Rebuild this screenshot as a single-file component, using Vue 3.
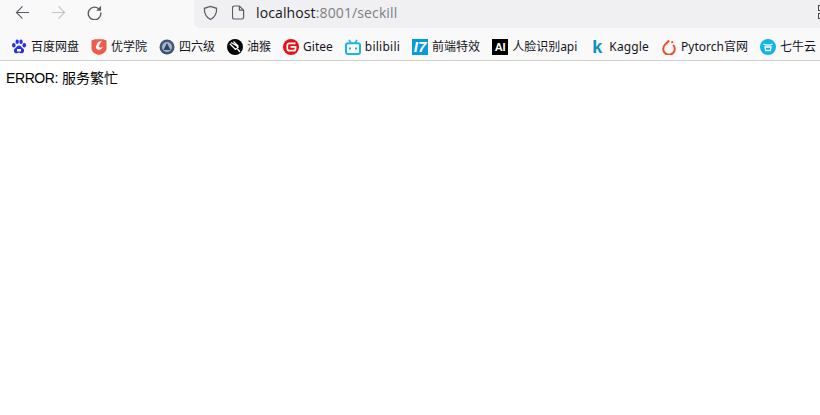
<script setup>
const bookmarks = [
  { id: 'baidu', label: '百度网盘' },
  { id: 'you', label: '优学院' },
  { id: 'cet', label: '四六级' },
  { id: 'monkey', label: '油猴' },
  { id: 'gitee', label: 'Gitee' },
  { id: 'bili', label: 'bilibili' },
  { id: 'qd', label: '前端特效' },
  { id: 'ai', label: '人脸识别api' },
  { id: 'kaggle', label: 'Kaggle' },
  { id: 'torch', label: 'Pytorch官网' },
  { id: 'qiniu', label: '七牛云' }
]
</script>

<template>
  <div class="page">
    <header class="toolbar">
      <nav class="nav">
        <svg class="nav-icon" viewBox="0 0 16 16" fill="none" stroke="#5b5b66" stroke-width="1.2"><path d="M15 8H1.500M8 1.500 1.500 8 8 14.500" /></svg>
        <svg class="nav-icon" viewBox="0 0 16 16" fill="none" stroke="#c4c4c8" stroke-width="1.2"><path d="M1 8h13.500M8 1.500 14.500 8 8 14.500" /></svg>
        <svg class="nav-icon" viewBox="0 0 16 16" fill="none" stroke="#5b5b66" stroke-width="1.500"><path d="M13.300 4.800A6.700 6.700 0 1 0 14.700 8" /><path d="M15 .8V6H9.800Z" fill="#5b5b66" stroke="none" /></svg>
      </nav>
      <div class="urlbar">
        <svg class="shield" viewBox="0 0 16 16" fill="none" stroke="#5b5b66" stroke-width="1.300"><path d="M8 1 14.500 3c.3 6-1.500 9.500-6.500 12C3 12.500 1.200 9 1.500 3Z" /></svg>
        <svg class="file" viewBox="0 0 14 16" fill="none" stroke="#5b5b66" stroke-width="1.300"><path d="M2.500 1h5.500l4.500 4.500V13a2 2 0 0 1-2 2h-8a2 2 0 0 1-2-2V3a2 2 0 0 1 2-2Z" /><path d="M8 1v4.500h4.500" /></svg>
        <span class="url">localhost<span class="url-rest">:8001/seckill</span></span>
        <span class="cut-icon"><i></i><i></i></span>
      </div>
    </header>

    <div class="bookmarks">
      <div v-for="b in bookmarks" :key="b.id" class="bookmark">
        <span class="bm-icon">
          <svg v-if="b.id === 'baidu'" viewBox="0 0 16 16" fill="#2932e1"><ellipse cx="2.800" cy="6.200" rx="1.800" ry="2.300" /><ellipse cx="6.200" cy="2.800" rx="1.700" ry="2.300" /><ellipse cx="10" cy="2.800" rx="1.700" ry="2.300" /><ellipse cx="13.300" cy="6.200" rx="1.800" ry="2.300" /><path d="M8 6.500c2 0 2.500 2 4 3 2 1.500 1 5-1.500 4.800-1 0-1.500-.5-2.500-.5s-1.500.5-2.500.5C3 14.500 2 11 4 9.500c1.500-1 2-3 4-3Z" /><path d="M6 10h4v2.500H6Z" fill="#fff" /></svg>
          <svg v-else-if="b.id === 'you'" viewBox="0 0 16 16"><path d="M.5 1.500 4 .2h8l3.500 1.300v8C15.500 13 11 15.800 8 15.800S.5 13 .5 9.500Z" fill="#ee5a4c" /><path d="M10.800 1.800 7 3 4.800 7.500c0 3 3.200 4.200 5.700 2.500L12 7.500 9.500 8.800 7.500 7.500Z" fill="#fff" /></svg>
          <svg v-else-if="b.id === 'cet'" viewBox="0 0 16 16"><circle cx="8" cy="8" r="7.500" fill="#3f5578" /><circle cx="8" cy="8" r="5" fill="#a9b4c6" /><path d="M4.500 11 8 4l3.500 7Z" fill="#2f4568" /></svg>
          <svg v-else-if="b.id === 'monkey'" viewBox="0 0 16 16"><circle cx="8" cy="8" r="8" fill="#000" /><path d="M2.800 4.800 8.500 10.500 11 8.500 9.500 6.500M4 3.500l6 3.500M6.500 2.500l5 5M10.500 10l2.500 3" stroke="#fff" stroke-width="1.300" fill="none" /></svg>
          <svg v-else-if="b.id === 'gitee'" viewBox="0 0 16 16"><circle cx="8" cy="8" r="8" fill="#e60f14" /><path d="M12.500 4.300H6.300a2 2 0 0 0-2 2v3.400a2 2 0 0 0 2 2h4.200a2 2 0 0 0 2-2V7.800H7.500" fill="none" stroke="#fff" stroke-width="1.700" /></svg>
          <svg v-else-if="b.id === 'bili'" viewBox="0 0 16 16" fill="none" stroke="#1fb3e0"><rect x="1" y="4.300" width="14" height="10.700" rx="2" stroke-width="2" /><path d="M4 .8 6 4M12 .8 10 4" stroke-width="1.600" /><path d="M5 8.500v2M11 8.500v2" stroke-width="2" /></svg>
          <span v-else-if="b.id === 'qd'" class="qd">I7</span>
          <span v-else-if="b.id === 'ai'" class="ai">AI</span>
          <span v-else-if="b.id === 'kaggle'" class="kaggle">k</span>
          <svg v-else-if="b.id === 'torch'" viewBox="0 0 16 16" fill="none" stroke="#ee4c2c" stroke-width="2"><path d="M8.200 1.500 3.800 5.900a5.800 5.800 0 1 0 8.400 0" /><circle cx="11.200" cy="3.200" r="1.100" fill="#ee4c2c" stroke="none" /></svg>
          <svg v-else viewBox="0 0 16 16"><circle cx="8" cy="8" r="8" fill="#10b3ea" /><path d="M3.500 5c2 1.500 7 1.500 9 0" stroke="#fff" stroke-width="1.400" fill="none" /><path d="M5 8h6l-.7 3.500H5.700Z" fill="none" stroke="#fff" stroke-width="1.300" /></svg>
        </span>
        <span class="bm-label" :class="`label-${b.id}`">{{ b.label }}</span>
      </div>
    </div>

    <main class="content"><span class="latin">ERROR:</span> 服务繁忙</main>
  </div>
</template>

<style scoped>
.page {
  width: 820px;
  height: 415px;
  overflow: hidden;
  background: #fff;
  font-family: "Noto Sans", "Noto Sans CJK SC", sans-serif;
}
.toolbar {
  height: 28px;
  display: flex;
  background: #f9f9fa;
}
.nav {
  width: 194px;
  display: flex;
  align-items: flex-start;
  gap: 21px;
  padding: 5px 0 0 15px;
  box-sizing: border-box;
}
.nav-icon {
  width: 15px;
  height: 15px;
  flex: none;
}
.urlbar {
  flex: 1;
  display: flex;
  align-items: center;
  background: #f0f0f2;
  border-bottom-left-radius: 6px;
  padding: 0 0 3px 9px;
  position: relative;
}
.shield {
  width: 15px;
  height: 16px;
  flex: none;
}
.file {
  width: 13px;
  height: 15px;
  flex: none;
  margin-left: 14px;
}
.url {
  margin-left: 11px;
  font-size: 14px;
  letter-spacing: 0.12px;
  color: #15141a;
  font-family: "Open Sans", "Noto Sans", sans-serif;
  white-space: nowrap;
}
.url-rest {
  color: #7f7e83;
}
.cut-icon {
  position: absolute;
  right: -5px;
  top: 5px;
  display: flex;
  flex-direction: column;
  gap: 2px;
}
.cut-icon i {
  display: block;
  width: 5px;
  height: 4px;
  border: 1px solid #444;
}
.bookmarks {
  height: 33px;
  box-sizing: border-box;
  display: flex;
  align-items: center;
  gap: 12px;
  padding: 5px 0 0 11px;
  background: #f9f9fa;
  border-bottom: 1px solid #cfcfcb;
  white-space: nowrap;
}
.bookmark {
  display: flex;
  align-items: center;
  gap: 4px;
  flex: none;
}
.bm-icon {
  width: 16px;
  height: 16px;
  display: flex;
  align-items: center;
  justify-content: center;
  flex: none;
}
.bm-icon svg {
  width: 16px;
  height: 16px;
}
.bm-label {
  font-size: 12px;
  line-height: 16px;
  color: #15141a;
}
.label-bili {
  letter-spacing: 0.25px;
}
.label-kaggle {
  letter-spacing: 0.15px;
}
.qd {
  width: 16px;
  height: 16px;
  background: #0a9ad9;
  color: #fff;
  font: italic 700 15px/16px "Liberation Sans", sans-serif;
  text-align: center;
}
.ai {
  width: 16px;
  height: 16px;
  background: #000;
  color: #fff;
  font: 700 11px/16px "Liberation Sans", sans-serif;
  text-align: center;
}
.kaggle {
  color: #0e8fbd;
  font: 700 18px/16px "Liberation Sans", sans-serif;
}
.content {
  padding: 8px 0 0 6px;
  font-size: 14px;
  line-height: 19px;
  color: #000;
  font-family: "Liberation Sans", "Noto Sans CJK SC", sans-serif;
}
.latin {
  letter-spacing: -0.4px;
}
</style>
